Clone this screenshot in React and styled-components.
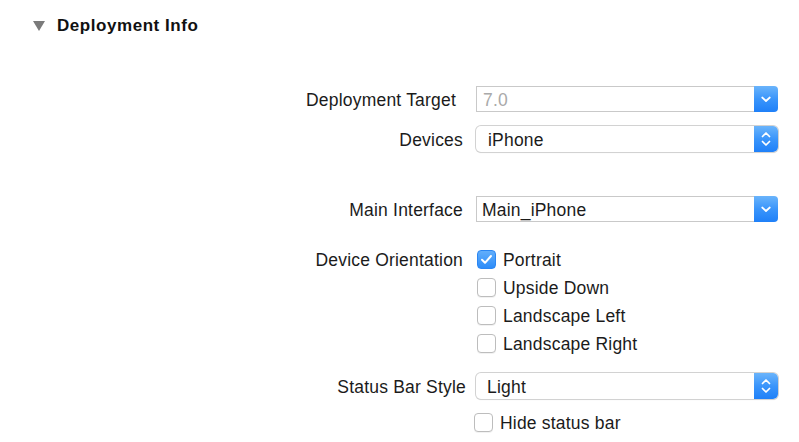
import React from "react";
import styled, { createGlobalStyle } from "styled-components";

const Global = createGlobalStyle`
  html, body { margin: 0; padding: 0; background: #ffffff; }
  body {
    font-family: "Liberation Sans", Arial, Helvetica, sans-serif;
    color: #1b1b1b;
    -webkit-font-smoothing: antialiased;
  }
`;

const Page = styled.div`
  width: 799px;
  height: 442px;
  overflow: hidden;
  background: #fff;
`;

const Header = styled.div`
  display: flex;
  align-items: center;
  gap: 12px;
  margin-top: 16px;
  padding-left: 33px;
  height: 20px;
`;

const Disclosure = styled.span`
  width: 0;
  height: 0;
  border-left: 6.5px solid transparent;
  border-right: 6.5px solid transparent;
  border-top: 10px solid #7b7b7b;
  margin-top: -1px;
`;

const Title = styled.h2`
  margin: 0;
  font-size: 17px;
  font-weight: 700;
  letter-spacing: 0.55px;
  line-height: 20px;
  height: 20px;
  color: #111;
`;

const Form = styled.div`
  display: flex;
  flex-direction: column;
  margin-top: 50px;
`;

const Row = styled.div`
  display: grid;
  grid-template-columns: 476px 302px;
  align-items: start;
  margin-top: ${(p) => p.$top || 0}px;
`;

const Label = styled.div`
  box-sizing: border-box;
  height: ${(p) => p.$lh || 26}px;
  text-align: right;
  padding-right: ${(p) => p.$pad ?? 13}px;
  padding-top: 1px;
  font-size: 17.5px;
  letter-spacing: 0.2px;
  line-height: ${(p) => p.$lh || 26}px;
  white-space: nowrap;
  color: #1b1b1b;
`;

const Combo = styled.div`
  display: flex;
  height: 26px;
  box-sizing: border-box;
`;

const ComboField = styled.div`
  flex: 1;
  display: flex;
  align-items: center;
  box-sizing: border-box;
  height: 26px;
  border: 1px solid #c9c9c9;
  border-right: none;
  background: #fff;
  padding-left: ${(p) => p.$pl || 6}px;
  padding-top: 2px;
  font-size: 17.5px;
  letter-spacing: 0.2px;
  color: ${(p) => (p.$muted ? "#a9a9a9" : "#1b1b1b")};
`;

const BlueButton = styled.div`
  width: 24px;
  height: 100%;
  display: flex;
  align-items: center;
  justify-content: center;
  background: linear-gradient(to bottom, #6ab4fb 0%, #3a95fb 50%, #1f80f8 100%);
  border-radius: 0 4px 4px 0;
  box-sizing: border-box;
`;

const Popup = styled.div`
  display: flex;
  height: 26px;
  box-sizing: border-box;
  border-radius: 5px;
  background: #fff;
  box-shadow: 0 0 0 1px #d2d2d2, 0 1px 1px rgba(0, 0, 0, 0.14);
  overflow: hidden;
`;

const PopupText = styled.div`
  flex: 1;
  display: flex;
  align-items: center;
  padding-left: ${(p) => p.$pl || 12}px;
  padding-top: 2px;
  font-size: 17.5px;
  letter-spacing: 0.2px;
  color: #1b1b1b;
`;

const CheckList = styled.div`
  display: flex;
  flex-direction: column;
  margin-left: ${(p) => p.$ml || 0}px;
`;

const CheckItem = styled.label`
  display: flex;
  align-items: center;
  gap: 7px;
  height: 28px;
  font-size: 17.5px;
  letter-spacing: 0.2px;
  color: #1b1b1b;
`;

const CheckText = styled.span`
  padding-top: 2px;
`;

const Box = styled.span`
  width: 19px;
  height: 19px;
  box-sizing: border-box;
  border-radius: 4px;
  display: flex;
  align-items: center;
  justify-content: center;
  flex: none;
  background: ${(p) =>
    p.$checked
      ? "linear-gradient(to bottom, #62aefb 0%, #2c8cf9 100%)"
      : "#fff"};
  border: 1px solid ${(p) => (p.$checked ? "#2b86f2" : "#bdbdbd")};
  box-shadow: ${(p) => (p.$checked ? "none" : "0 1px 0 rgba(0,0,0,0.05)")};
`;

const ChevronDown = () => (
  <svg width="10" height="7" viewBox="0 0 10 7">
    <path d="M1.2 1.5 L5 5 L8.8 1.5" fill="none" stroke="#fff" strokeWidth="1.7" strokeLinecap="round" strokeLinejoin="round" />
  </svg>
);

const ChevronUpDown = () => (
  <svg width="10" height="16" viewBox="0 0 10 16">
    <path d="M1.5 5.5 L5 2 L8.5 5.5" fill="none" stroke="#fff" strokeWidth="1.7" strokeLinecap="round" strokeLinejoin="round" />
    <path d="M1.5 10.5 L5 14 L8.5 10.5" fill="none" stroke="#fff" strokeWidth="1.7" strokeLinecap="round" strokeLinejoin="round" />
  </svg>
);

const Check = () => (
  <svg width="13" height="11" viewBox="0 0 13 11">
    <path d="M2 5.8 L5 8.8 L11 2" fill="none" stroke="#fff" strokeWidth="2" strokeLinecap="round" strokeLinejoin="round" />
  </svg>
);

const Checkbox = ({ checked, children }) => (
  <CheckItem>
    <Box $checked={checked}>{checked && <Check />}</Box>
    <CheckText>{children}</CheckText>
  </CheckItem>
);

export default function App() {
  return (
    <Page>
      <Global />
      <Header>
        <Disclosure />
        <Title>Deployment Info</Title>
      </Header>
      <Form>
        <Row>
          <Label $pad={20}>Deployment Target</Label>
          <Combo>
            <ComboField $muted $pl={6}>7.0</ComboField>
            <BlueButton><ChevronDown /></BlueButton>
          </Combo>
        </Row>
        <Row $top={14}>
          <Label>Devices</Label>
          <Popup>
            <PopupText $pl={12}>iPhone</PopupText>
            <BlueButton><ChevronUpDown /></BlueButton>
          </Popup>
        </Row>
        <Row $top={44}>
          <Label>Main Interface</Label>
          <Combo>
            <ComboField $pl={5}>Main_iPhone</ComboField>
            <BlueButton><ChevronDown /></BlueButton>
          </Combo>
        </Row>
        <Row $top={23}>
          <Label $lh={28}>Device Orientation</Label>
          <CheckList $ml={1}>
            <Checkbox checked>Portrait</Checkbox>
            <Checkbox>Upside Down</Checkbox>
            <Checkbox>Landscape Left</Checkbox>
            <Checkbox>Landscape Right</Checkbox>
          </CheckList>
        </Row>
        <Row $top={16}>
          <Label $pad={10}>Status Bar Style</Label>
          <Popup>
            <PopupText $pl={11}>Light</PopupText>
            <BlueButton><ChevronUpDown /></BlueButton>
          </Popup>
        </Row>
        <Row $top={9}>
          <span />
          <CheckList $ml={-2}>
            <Checkbox>Hide status bar</Checkbox>
          </CheckList>
        </Row>
      </Form>
    </Page>
  );
}
